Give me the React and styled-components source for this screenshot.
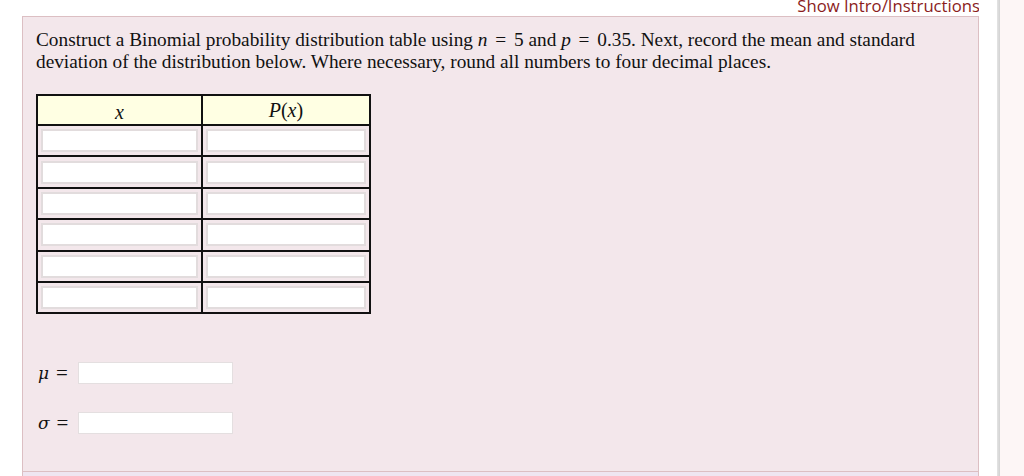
import React from "react";
import styled, { createGlobalStyle } from "styled-components";

const GlobalStyle = createGlobalStyle`
  html, body {
    margin: 0;
    padding: 0;
    background: #ffffff;
    overflow: hidden;
  }
`;

const St = {
  Page: styled.div`
    display: flex;
    width: 1024px;
    height: 476px;
    overflow: hidden;
  `,
  Main: styled.main`
    flex: 0 0 997px;
    display: flex;
    flex-direction: column;
    box-sizing: border-box;
    padding: 0 18px 0 22px;
  `,
  Scrollbar: styled.div`
    flex: 0 0 3px;
    background: linear-gradient(to right, #e4e4e4, #d2d2d2);
  `,
  SideStrip: styled.div`
    flex: auto;
    background-color: #fdf6f6;
  `,
  TopBar: styled.div`
    display: flex;
    justify-content: flex-end;
    height: 16px;
    overflow: hidden;
  `,
  IntroLink: styled.a`
    font-family: "Open Sans", "DejaVu Sans", sans-serif;
    font-size: 16.7px;
    line-height: 16px;
    color: #8b1c1c;
    text-decoration: none;
    margin-top: -2px;
    margin-right: -1px;
  `,
  Panel: styled.section`
    box-sizing: border-box;
    height: 455px;
    border: 1px solid #dcbfc3;
    border-bottom: none;
    background-color: #f3e7eb;
    padding: 12px 13px 0;
    display: flex;
    flex-direction: column;
  `,
  Question: styled.p`
    margin: 0;
    width: 900px;
    font-family: "Liberation Serif", "Times New Roman", serif;
    font-size: 19.3px;
    line-height: 22px;
    color: #111;
  `,
  Math: styled.span`
    font-family: ${({ greek }) =>
      greek ? `"DejaVu Serif", serif` : `"Liberation Serif", serif`};
    font-style: ${({ upright }) => (upright ? "normal" : "italic")};
    font-size: ${({ size }) => size || "inherit"};
    padding: 0 ${({ pad }) => pad || "0"};
  `,
  Table: styled.table`
    margin-top: 21px;
    border-collapse: collapse;
    width: 335px;
    border: 2px solid #111;
  `,
  HeadCell: styled.th`
    height: 28px;
    padding: 0;
    border: 2px solid #111;
    background-color: #ffffe3;
    font-family: "Liberation Serif", "Times New Roman", serif;
    font-style: italic;
    font-weight: normal;
    font-size: 20px;
    color: #111;
    vertical-align: ${({ low }) => (low ? "bottom" : "middle")};
    line-height: ${({ low }) => (low ? "24px" : "normal")};
  `,
  Cell: styled.td`
    height: 29.4px;
    padding: 0 3px;
    border: 2px solid #111;
    border-left-color: ${({ inner }) => (inner ? "#333" : "#111")};
  `,
  CellInput: styled.input`
    display: block;
    box-sizing: border-box;
    width: 100%;
    height: 23px;
    margin: 0;
    border: 2px solid #e2dcdd;
    background: #ffffff;
    outline: none;
  `,
  StatRow: styled.div`
    display: flex;
    align-items: center;
    gap: 7px;
    height: 24px;
    margin-top: ${({ top }) => top};
    padding-left: 2px;
  `,
  StatLabel: styled.span`
    display: flex;
    align-items: center;
    gap: 7px;
    width: 33px;
    font-family: "Liberation Serif", "Times New Roman", serif;
    color: #111;
    white-space: nowrap;
  `,
  StatInput: styled.input`
    box-sizing: border-box;
    width: 155px;
    height: 22px;
    margin: 0;
    border: 1px solid #e4dfe0;
    background: #ffffff;
    outline: none;
  `,
  NextPanel: styled.div`
    flex: auto;
    border: 1px solid #dcbfc3;
    border-bottom: none;
    background-color: #efe6f1;
  `,
};

const rows = [0, 1, 2, 3, 4, 5];

const Eq = ({ size, pad = "3px" }) => (
  <St.Math upright pad={pad} size={size}>
    =
  </St.Math>
);

const App = () => {
  return (
    <>
      <GlobalStyle />
      <St.Page>
        <St.Main>
          <St.TopBar>
            <St.IntroLink href="#">Show Intro/Instructions</St.IntroLink>
          </St.TopBar>
          <St.Panel>
            <St.Question>
              Construct a Binomial probability distribution table using{" "}
              <St.Math>n</St.Math> <Eq /> 5 and <St.Math>p</St.Math> <Eq />{" "}
              0.35. Next, record the mean and standard deviation of the
              distribution below. Where necessary, round all numbers to four
              decimal places.
            </St.Question>
            <St.Table>
              <thead>
                <tr>
                  <St.HeadCell low>x</St.HeadCell>
                  <St.HeadCell>
                    P<span style={{ fontStyle: "normal" }}>(</span>x
                    <span style={{ fontStyle: "normal" }}>)</span>
                  </St.HeadCell>
                </tr>
              </thead>
              <tbody>
                {rows.map((r) => (
                  <tr key={`row-${r}`}>
                    <St.Cell>
                      <St.CellInput type="text" />
                    </St.Cell>
                    <St.Cell inner>
                      <St.CellInput type="text" />
                    </St.Cell>
                  </tr>
                ))}
              </tbody>
            </St.Table>
            <St.StatRow top="47px">
              <St.StatLabel>
                <St.Math greek size="17px">μ</St.Math>
                <Eq size="21px" pad="0" />
              </St.StatLabel>
              <St.StatInput type="text" />
            </St.StatRow>
            <St.StatRow top="26px">
              <St.StatLabel>
                <St.Math greek size="17px">σ</St.Math>
                <Eq size="21px" pad="0" />
              </St.StatLabel>
              <St.StatInput type="text" />
            </St.StatRow>
          </St.Panel>
          <St.NextPanel />
        </St.Main>
        <St.Scrollbar />
        <St.SideStrip />
      </St.Page>
    </>
  );
};

export default App;
